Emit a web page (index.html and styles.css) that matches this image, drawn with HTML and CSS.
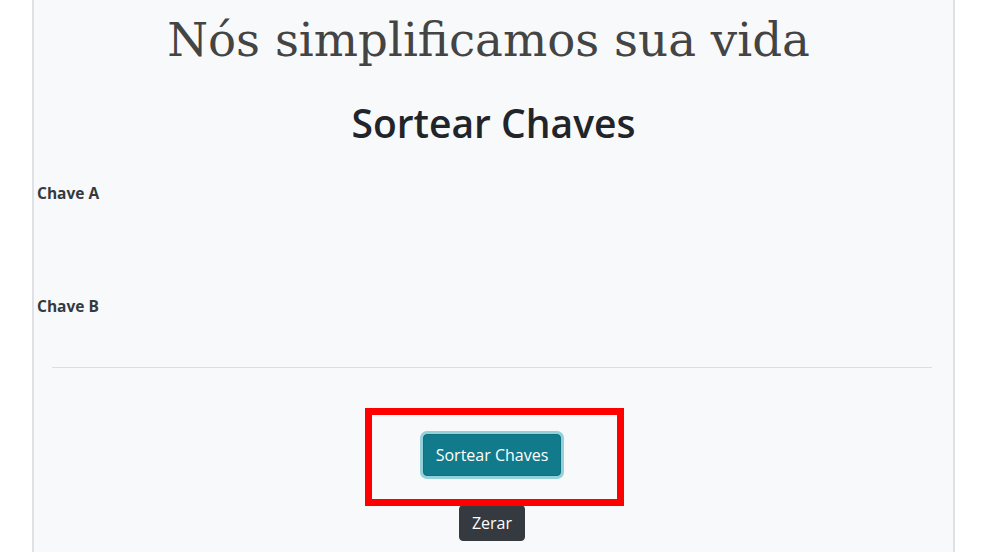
FILE: index.html
```html
<!DOCTYPE html>
<html lang="pt">
<head>
<meta charset="utf-8">
<title>Sortear Chaves</title>
<link rel="stylesheet" href="styles.css">
</head>
<body>
<div class="page">
  <h1 class="title">Nós simplificamos sua vida</h1>
  <h2 class="subtitle">Sortear Chaves</h2>
  <div class="group group-a">
    <div class="label">Chave A</div>
  </div>
  <div class="group group-b">
    <div class="label">Chave B</div>
  </div>
  <hr class="divider">
  <div class="actions">
    <div class="highlight-wrap">
      <button class="btn btn-info" type="button">Sortear Chaves</button>
      <div class="highlight"></div>
    </div>
    <button class="btn btn-dark" type="button">Zerar</button>
  </div>
</div>
</body>
</html>
```

FILE: styles.css
```css
html, body {
  margin: 0;
  padding: 0;
  background: #ffffff;
  height: 100%;
  overflow: hidden;
}

.page {
  box-sizing: border-box;
  margin-left: 32px;
  width: 923px;
  min-height: 552px;
  background: #f8f9fa;
  border-left: 2px solid #dee2e6;
  border-right: 2px solid #dee2e6;
  padding: 0 3px;
  font-family: "Open Sans", "Noto Sans", sans-serif;
  color: #212529;
}

.title {
  margin: 0;
  padding: 12px 10px 0 0;
  text-align: center;
  font-family: "DejaVu Serif", serif;
  font-weight: 400;
  font-size: 46.7px;
  line-height: 56px;
  color: #444444;
}

.subtitle {
  margin: 31px 0 0;
  text-align: center;
  font-weight: 600;
  font-size: 39px;
  line-height: 48px;
  color: #212529;
}

.group-a {
  margin-top: 36px;
  height: 113px;
}

.group-b {
  height: 71px;
}

.label {
  font-weight: 700;
  font-size: 15.5px;
  line-height: 20px;
  color: #343a40;
}

.divider {
  border: 0;
  border-top: 1px solid #dcdfe2;
  margin: 0 18px 0 15px;
}

.actions {
  display: flex;
  flex-direction: column;
  align-items: center;
  padding: 66px 3px 0 0;
}

.highlight-wrap {
  position: relative;
}

.highlight {
  position: absolute;
  left: -58px;
  top: -26px;
  width: 259px;
  height: 98px;
  box-sizing: border-box;
  border: 7px solid #ff0000;
  pointer-events: none;
}

.btn {
  font-family: "Open Sans", "Noto Sans", sans-serif;
  font-size: 16px;
  line-height: 22px;
  color: #ffffff;
  border-radius: 4px;
  cursor: pointer;
}

.btn-info {
  padding: 9px 12px;
  background: #117a8b;
  border: 1px solid #10707f;
  box-shadow: 0 0 0 3px rgba(82, 181, 197, 0.6);
}

.btn-dark {
  margin-top: 29px;
  padding: 6px 12px;
  background: #343a40;
  border: 1px solid #343a40;
}
```
